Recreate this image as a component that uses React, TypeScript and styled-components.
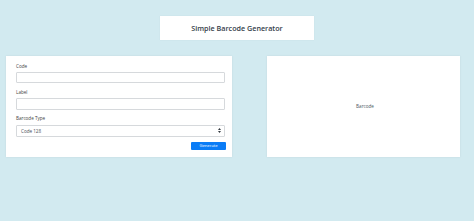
import React, { FC, useState } from "react"
import styled, { createGlobalStyle } from 'styled-components'

const GlobalStyle = createGlobalStyle({
  'html, body': {
    margin: 0,
    padding: 0,
    background: '#d2eaf0',
    fontFamily: '"Open Sans", "Liberation Sans", sans-serif',
  },
})

const Page = styled.div({
  display: 'flex',
  flexDirection: 'column',
  alignItems: 'center',
  paddingTop: '16px',
  minHeight: '221px',
  boxSizing: 'border-box',
})

const TitleBox = styled.div({
  width: '154px',
  height: '24px',
  background: '#fff',
  display: 'flex',
  alignItems: 'center',
  justifyContent: 'center',
  boxShadow: '0 0 1px rgba(0,0,0,0.08)',
})

const Title = styled.h1({
  margin: 0,
  fontSize: '7.2px',
  fontWeight: 600,
  color: '#34404a',
})

const Row = styled.div({
  alignSelf: 'stretch',
  display: 'grid',
  gridTemplateColumns: '226px 193px',
  columnGap: '35px',
  padding: '0 14px 0 6px',
  marginTop: '16px',
})

const Card = styled.div<{ $center?: boolean }>(({ $center }) => ({
  background: '#fff',
  boxShadow: '0 0 2px rgba(0,0,0,0.08)',
  padding: '6.5px 7px 7px 10px',
  display: 'flex',
  flexDirection: 'column',
  alignItems: $center ? 'center' : 'stretch',
  justifyContent: $center ? 'center' : 'flex-start',
}))

const Group = styled.div({
  display: 'flex',
  flexDirection: 'column',
  marginBottom: '5.7px',
})

const Label = styled.label({
  fontSize: '4.6px',
  lineHeight: '7px',
  color: '#444',
  marginBottom: '2.5px',
})

const Input = styled.input({
  height: '11.3px',
  boxSizing: 'border-box',
  border: '0.5px solid #d6d9dc',
  borderRadius: '1px',
  padding: '0 4px',
  fontSize: '4.6px',
  fontFamily: 'inherit',
  outline: 'none',
})

const SelectWrap = styled.div({
  height: '12px',
  boxSizing: 'border-box',
  border: '0.5px solid #d6d9dc',
  borderRadius: '1px',
  display: 'flex',
  alignItems: 'center',
  justifyContent: 'space-between',
  padding: '0 3.5px 0 4px',
  fontSize: '4.6px',
  color: '#495057',
})

const Actions = styled.div({
  display: 'flex',
  justifyContent: 'flex-end',
  marginTop: '-0.7px',
})

const Button = styled.button({
  width: '35px',
  height: '8px',
  padding: 0,
  border: 'none',
  borderRadius: '1px',
  background: '#0a7cf6',
  color: '#fff',
  fontSize: '4.2px',
  fontFamily: 'inherit',
  marginRight: '-1px',
})

const Placeholder = styled.span({
  fontSize: '4.6px',
  color: '#4a5560',
})

const Chevrons: FC = () => (
  <svg width="3" height="5" viewBox="0 0 6 10">
    <path d="M0 4 L3 0 L6 4 Z M0 6 L3 10 L6 6 Z" fill="#343a40" />
  </svg>
)

export default function App() {
  const [code, setCode] = useState('')
  const [label, setLabel] = useState('')

  return (
    <>
      <GlobalStyle />
      <Page>
        <TitleBox>
          <Title>Simple Barcode Generator</Title>
        </TitleBox>
        <Row>
          <Card>
            <Group>
              <Label>Code</Label>
              <Input value={code} onChange={e => setCode(e.target.value)} />
            </Group>
            <Group>
              <Label>Label</Label>
              <Input value={label} onChange={e => setLabel(e.target.value)} />
            </Group>
            <Group>
              <Label>Barcode Type</Label>
              <SelectWrap>
                <span>Code 128</span>
                <Chevrons />
              </SelectWrap>
            </Group>
            <Actions>
              <Button>Generate</Button>
            </Actions>
          </Card>
          <Card $center>
            <Placeholder>Barcode</Placeholder>
          </Card>
        </Row>
      </Page>
    </>
  )
}
